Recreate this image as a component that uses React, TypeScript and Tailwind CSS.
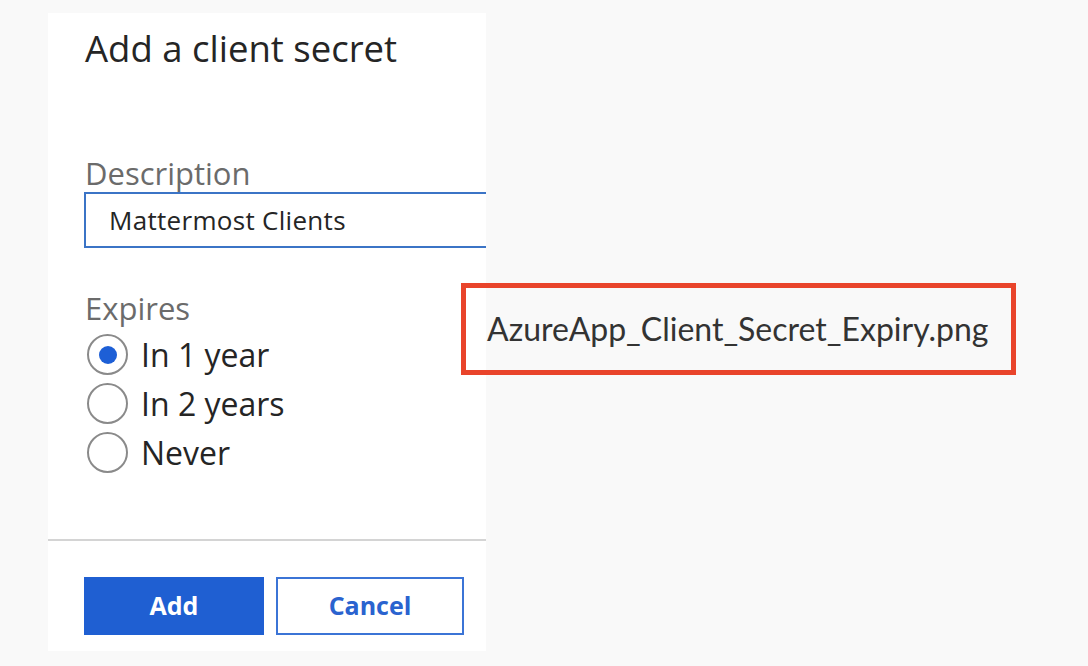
export default function App() {
  const options = [
    { label: "In 1 year", checked: true },
    { label: "In 2 years", checked: false },
    { label: "Never", checked: false },
  ];
  return (
    <div
      className="relative w-[1088px] h-[666px] bg-[#f9f9f9] overflow-hidden"
      style={{ fontFamily: '"Open Sans", "Noto Sans", sans-serif' }}
    >
      <div className="pt-[13px] pl-[48px]">
        <div className="w-[438px] h-[638px] bg-white overflow-hidden flex flex-col">
          <div className="pl-[37px] pt-[12px] text-[36.5px] leading-[46px] text-[#252525]">
            Add a client secret
          </div>
          <div className="pl-[37px] mt-[83px] text-[31px] leading-[38px] text-[#6b6b6b]">
            Description
          </div>
          <div className="ml-[36px] w-[420px] h-[56px] border-2 border-[#3b74c6] flex items-center pl-[23px] text-[26px] tracking-[0.3px] text-[#252525]">
            Mattermost Clients
          </div>
          <div className="pl-[37px] mt-[41px] text-[31px] leading-[38px] text-[#6b6b6b]">
            Expires
          </div>
          <div className="pl-[39px] mt-[3px] flex flex-col">
            {options.map((o) => (
              <div key={o.label} className="flex items-center h-[49px] gap-[13px]">
                <div className="w-[41px] h-[41px] rounded-full border-2 border-[#8a8a8a] flex items-center justify-center">
                  {o.checked && <div className="w-[18px] h-[18px] rounded-full bg-[#1d5fd6]" />}
                </div>
                <span className="text-[32px] leading-[40px] text-[#252525]">{o.label}</span>
              </div>
            ))}
          </div>
          <div className="mt-[62px] h-[2px] bg-[#d4d4d4]" />
          <div className="pl-[36px] pt-[36px] flex gap-[12px]">
            <div className="w-[180px] h-[58px] bg-[#1f5fd2] text-white font-bold text-[25px] flex items-center justify-center">
              Add
            </div>
            <div className="w-[188px] h-[58px] border-2 border-[#3b74d6] text-[#2a63cf] font-bold text-[25px] flex items-center justify-center">
              Cancel
            </div>
          </div>
        </div>
      </div>
      <div
        className="absolute left-[461px] top-[283px] w-[555px] h-[92px] border-[5px] border-[#e9442b] flex items-center pl-[21px] text-[32px] text-[#333333]"
        style={{ fontFamily: 'Lato, sans-serif' }}
      >
        AzureApp_Client_Secret_Expiry.png
      </div>
    </div>
  );
}
